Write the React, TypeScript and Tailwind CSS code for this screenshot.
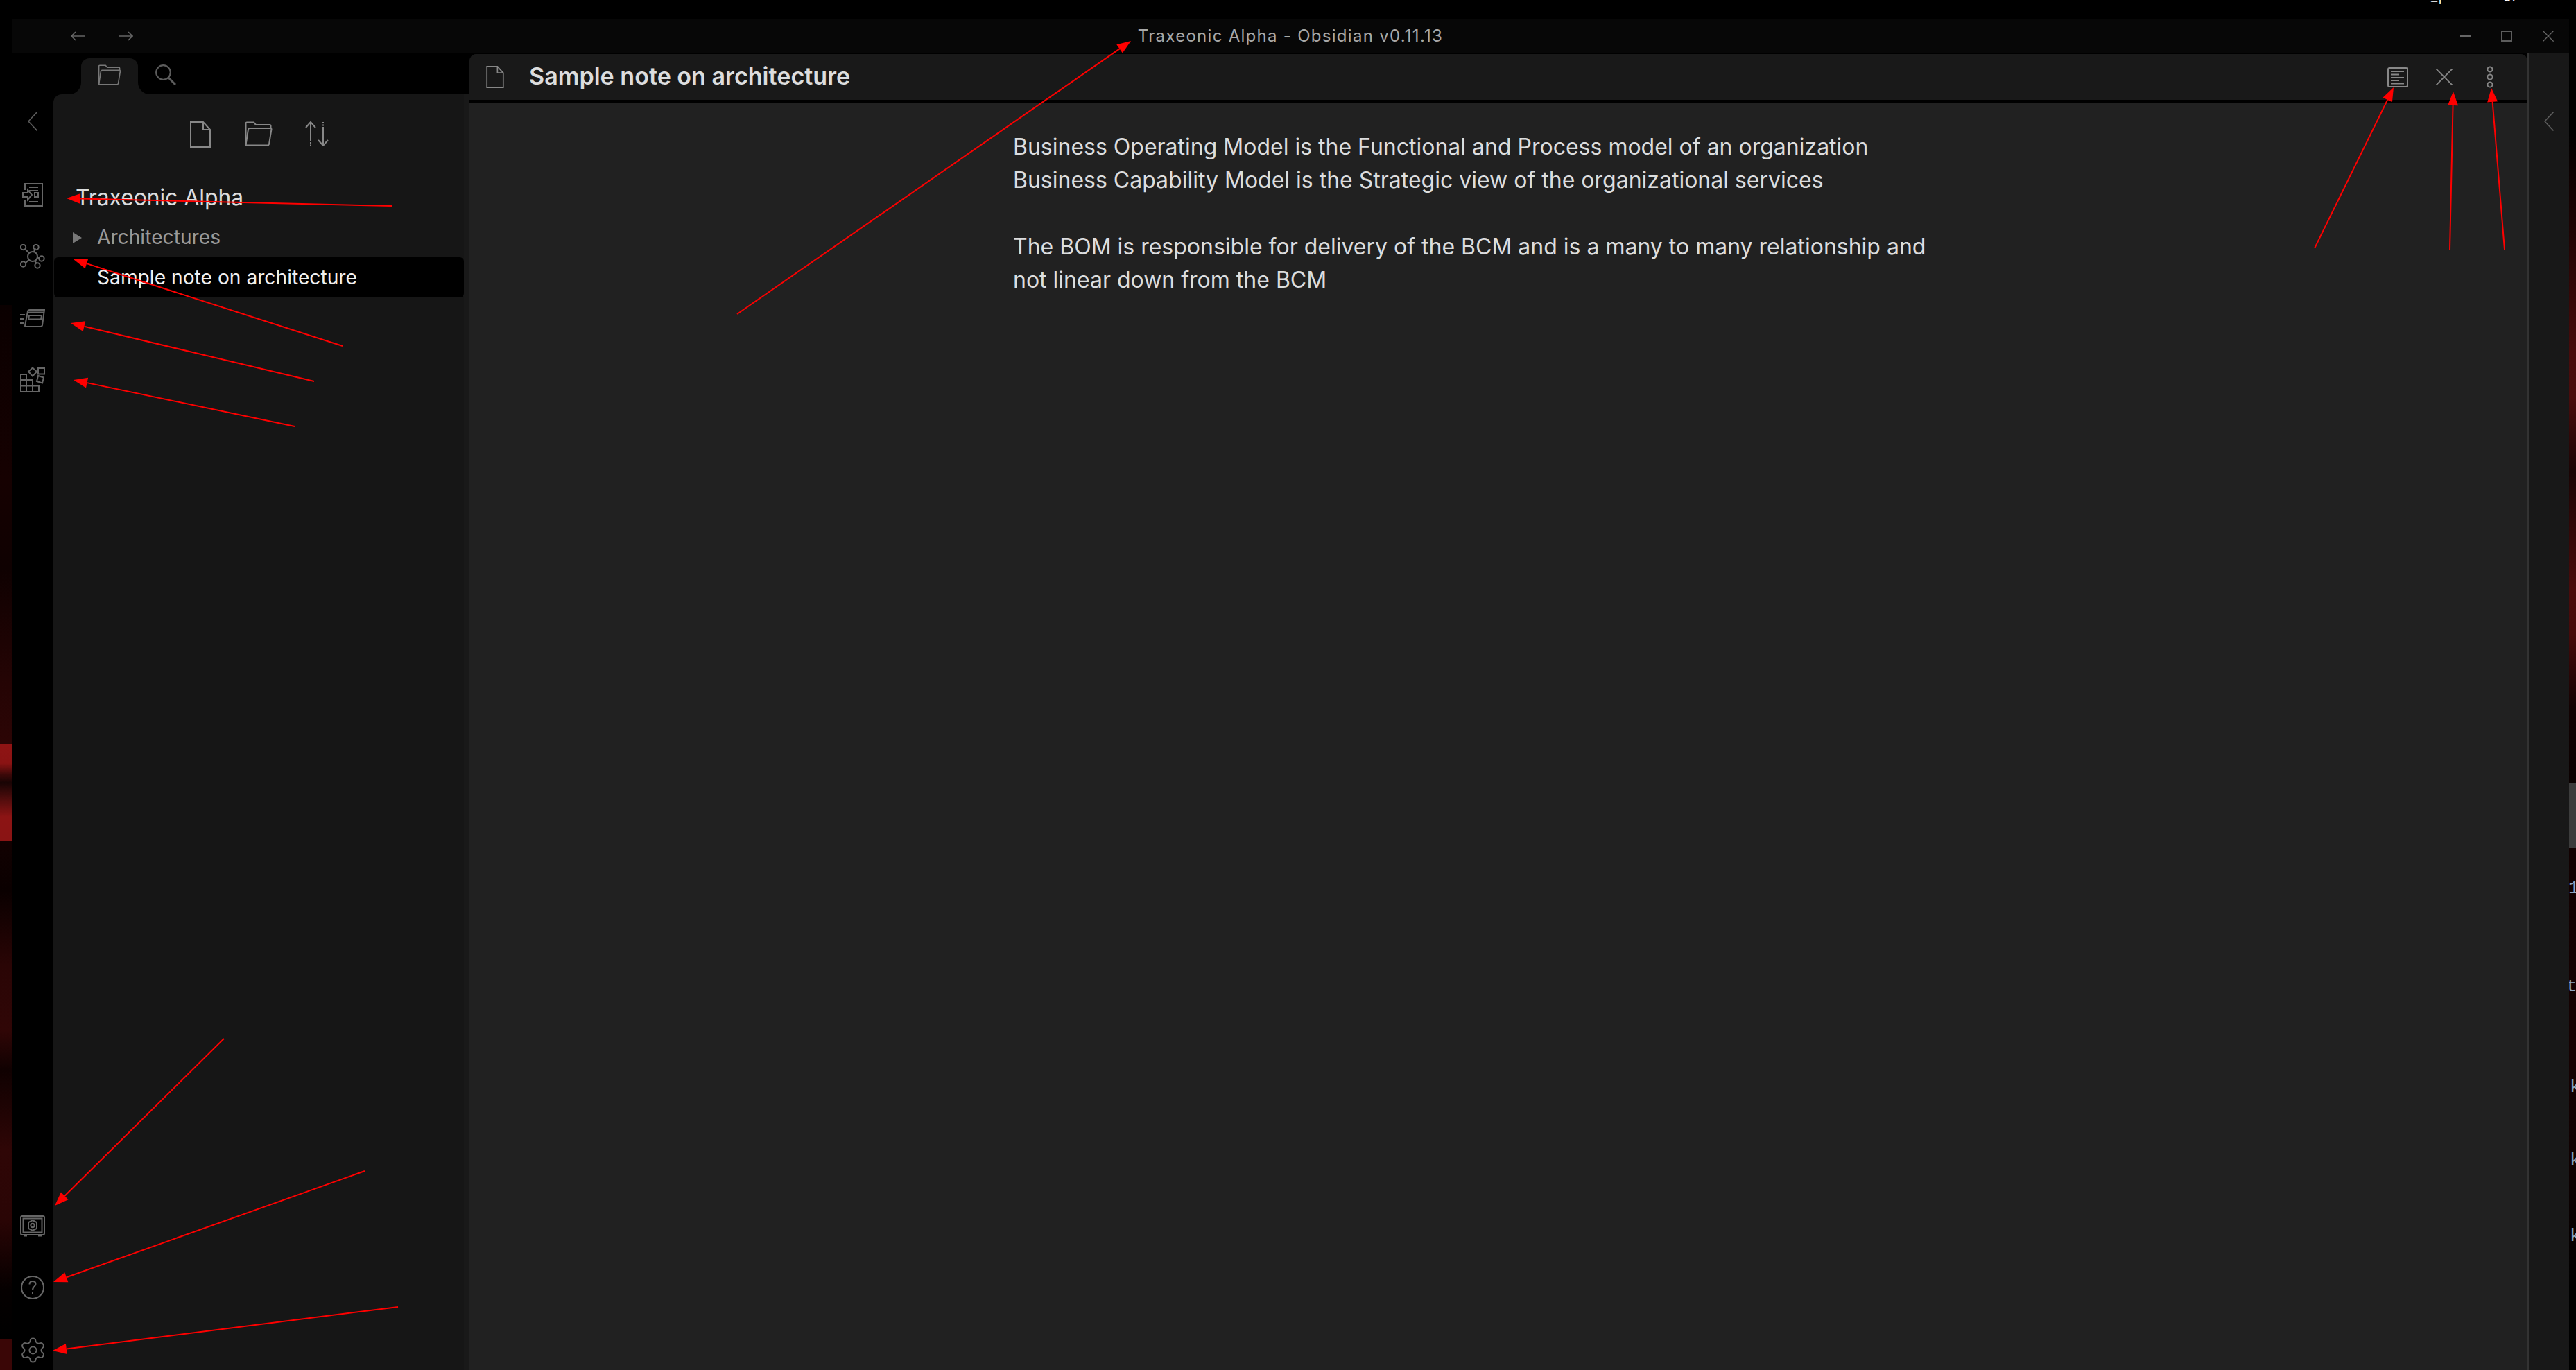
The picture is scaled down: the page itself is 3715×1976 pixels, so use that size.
import React from "react";
import { Settings } from "lucide-react";

const arrows: [number, number, number, number][] = [
  [96, 286, 565, 297],
  [106, 374, 494, 499],
  [102, 466, 453, 550],
  [106, 548, 425, 615],
  [79, 1739, 323, 1498],
  [77, 1849, 526, 1689],
  [76, 1948, 574, 1885],
  [1631, 59, 1063, 453],
  [3452, 126, 3338, 358],
  [3538, 132, 3533, 361],
  [3593, 127, 3612, 360],
];

function Arrows() {
  return (
    <svg className="absolute inset-0 w-full h-full pointer-events-none" viewBox="0 0 3715 1976">
      {arrows.map(([tx, ty, sx, sy], i) => {
        const d = Math.hypot(sx - tx, sy - ty);
        const ux = (sx - tx) / d;
        const uy = (sy - ty) / d;
        const L = 20;
        const W = 7.5;
        const bx = tx + ux * L;
        const by = ty + uy * L;
        return (
          <g key={i}>
            <line x1={bx} y1={by} x2={sx} y2={sy} stroke="#ff0000" strokeWidth={2} />
            <polygon
              points={`${tx},${ty} ${bx - uy * W},${by + ux * W} ${bx + uy * W},${by - ux * W}`}
              fill="#ff0000"
            />
          </g>
        );
      })}
    </svg>
  );
}

const FolderIcon = ({ w, h, c }: { w: number; h: number; c: string }) => (
  <svg width={w} height={h} viewBox="0 0 40 36" fill="none" stroke={c} strokeWidth="2">
    <path d="M1.5 34 V3 Q1.5 1.5 3 1.5 H13 L16 5 H36 Q37.5 5 37.5 6.5 V10" />
    <path d="M1.5 34 Q2 34.5 3 34.5 H33 Q34.5 34.5 35 33 L38.5 11.5 Q38.5 10 37 10 H7 Q5.5 10 5 11.5 Z" />
  </svg>
);

const FileIcon = ({ w, h, c }: { w: number; h: number; c: string }) => (
  <svg width={w} height={h} viewBox="0 0 30 38" fill="none" stroke={c} strokeWidth="2">
    <path d="M1 1 H19 L29 12 V37 H1 Z" />
    <path d="M19 1 V12 H29" />
  </svg>
);

const SortIcon = () => (
  <svg width="34" height="36" viewBox="0 0 34 36" fill="none" stroke="#888" strokeWidth="2">
    <path d="M1 9 L8 1 L15 9" />
    <path d="M8 1 V28" />
    <path d="M8 30 V35" strokeDasharray="2 1.5" />
    <path d="M26 1 V7" strokeDasharray="2 1.5" />
    <path d="M26 8 V35" />
    <path d="M19 27 L26 35 L33 27" />
  </svg>
);

const SearchIcon = () => (
  <svg width="30" height="30" viewBox="0 0 30 30" fill="none" stroke="#5c5c5c" strokeWidth="2.2">
    <circle cx="11.5" cy="11.5" r="10.3" />
    <path d="M19 19 L29 29" strokeWidth="3" />
  </svg>
);

const Chevron = ({ c }: { c: string }) => (
  <svg width="14" height="28" viewBox="0 0 14 28" fill="none" stroke={c} strokeWidth="1.6">
    <path d="M13.5 0.5 L1 14 L13.5 27.5" />
  </svg>
);

const NavArrow = ({ right }: { right?: boolean }) => (
  <svg width="20" height="14" viewBox="0 0 20 14" fill="none" stroke="#666" strokeWidth="1.6">
    {right ? <path d="M0 7 H19 M13 1 L19 7 L13 13" /> : <path d="M20 7 H1 M7 1 L1 7 L7 13" />}
  </svg>
);

const S = "#666";

const DocIcon = () => (
  <svg width="30" height="34" viewBox="0 0 30 34" fill="none" stroke={S} strokeWidth="2">
    <path d="M4 10 V1 H29 V33 H4 V24" />
    <path d="M10 6 H23 M10 11 H23 M10 27 H23" />
    <rect x="18" y="14" width="5" height="6" />
    <path d="M1 14 H8 V10 L14 17 L8 24 V20 H1 Z" />
  </svg>
);

const GraphIcon = () => (
  <svg width="36" height="36" viewBox="0 0 36 36" fill="none" stroke={S} strokeWidth="2">
    <circle cx="18" cy="18" r="7" />
    <circle cx="4.5" cy="4.5" r="3.7" />
    <circle cx="23" cy="4.5" r="3.7" />
    <circle cx="31" cy="21" r="3.7" />
    <circle cx="25" cy="31" r="3.7" />
    <circle cx="4.5" cy="29" r="3.7" />
    <path d="M7.5 7.5 L13 13 M22 5 L20 11 M25 19.5 L27.5 20.5 M21 24 L23.5 27.5 M8 27 L12.5 23" />
  </svg>
);

const CardsIcon = () => (
  <svg width="36" height="26" viewBox="0 0 36 26" fill="none" stroke={S} strokeWidth="2">
    <path d="M0 8 H7 M0 14 H5 M0 20 H6" />
    <path d="M7 24 L11 3 Q11.5 1 14 1 H35 L32 23 Q31.5 25 29 25 H9 Q7 25 7 24 Z" />
    <path d="M11 4.5 H34" />
    <path d="M13 9 H31 L30 14.5 H12 Z" />
  </svg>
);

const BricksIcon = () => (
  <svg width="36" height="36" viewBox="0 0 36 36" fill="none" stroke={S} strokeWidth="2">
    <path d="M1 35 V10 H9 V35 M1 18 H18 V35 M1 26.5 H27 V35 H1" />
    <path d="M18 0.5 L24 6 L18 12.5 L12 6 Z" />
    <rect x="26" y="1" width="9" height="8.5" />
    <path d="M26 12 L34 14.5 L32 22.5 L24 20 Z" />
  </svg>
);

const VaultIcon = () => (
  <svg width="36" height="31" viewBox="0 0 36 31" fill="none" stroke={S} strokeWidth="2">
    <rect x="1" y="1" width="34" height="27" rx="2" />
    <rect x="4.5" y="4.5" width="27" height="20" />
    <path d="M18 7 L24 10 V19 L18 22 L12 19 V10 Z" />
    <circle cx="18" cy="14.5" r="2.7" />
    <path d="M5 29.5 H10 M26 29.5 H31" />
  </svg>
);

const HelpIcon = () => (
  <svg width="34" height="34" viewBox="0 0 34 34" fill="none" stroke={S} strokeWidth="2">
    <circle cx="17" cy="17" r="16" />
    <path d="M12.5 12.5 C12.5 9.5 14.5 8 17 8 C19.7 8 21.5 9.7 21.5 12 C21.5 15.5 17 15.5 17 20.5" />
    <path d="M17 24 V26.5" />
  </svg>
);

const PreviewIcon = () => (
  <svg width="30" height="29" viewBox="0 0 30 29" fill="none" stroke="#888" strokeWidth="2">
    <rect x="1" y="1" width="28" height="27" rx="2" />
    <path d="M5 6 H24 M5 10.5 H17 M5 15 H24 M5 19 H17 M5 23.5 H24" />
  </svg>
);

const CloseIcon = ({ s, c }: { s: number; c: string }) => (
  <svg width={s} height={s} viewBox="0 0 24 24" fill="none" stroke={c} strokeWidth={s > 20 ? 1.8 : 2}>
    <path d="M0.5 0.5 L23.5 23.5 M23.5 0.5 L0.5 23.5" />
  </svg>
);

const MoreIcon = () => (
  <svg width="10" height="32" viewBox="0 0 10 32" fill="none" stroke="#888" strokeWidth="2">
    <circle cx="5" cy="5" r="3.6" />
    <circle cx="5" cy="16" r="3.6" />
    <circle cx="5" cy="27" r="3.6" />
  </svg>
);

function LeftStrip() {
  return (
    <div className="w-[17px] shrink-0 flex flex-col">
      <div className="h-[440px] bg-black" />
      <div className="h-[633px] bg-[linear-gradient(to_bottom,#0a0000_0%,#160101_40%,#0f0101_60%,#240404_85%,#2c0505_100%)]" />
      <div className="h-[140px] bg-[linear-gradient(to_bottom,#8f1414_0%,#8a1313_20%,#3a0808_32%,#180404_40%,#4a0c0c_55%,#8c1414_75%,#8a1414_100%)]" />
      <div className="h-[719px] bg-[linear-gradient(to_bottom,#120101_0%,#0a0000_10%,#2a0505_25%,#300606_38%,#100101_46%,#2f0606_62%,#2a0505_76%,#050000_90%,#000000_100%)]" />
      <div className="flex-1 bg-[#3a0606]" />
    </div>
  );
}

function RightStrip() {
  return (
    <div className="w-[10px] shrink-0 flex flex-col relative overflow-hidden pt-[60px]">
      <div className="h-[1069px] bg-[linear-gradient(to_bottom,#000000_0%,#000000_12%,#1e0303_25%,#480b0b_42%,#4a0c0c_48%,#1a0404_58%,#4a0b0b_74%,#460a0a_80%,#120202_90%,#0a0000_100%)]" />
      <div className="h-[94px] bg-[#3c3c3c]" />
      <div className="flex-1 bg-[linear-gradient(to_bottom,#120101_0%,#160202_40%,#100101_60%,#000000_85%)]" />
      <span className="absolute left-[-1px] top-[1266px] font-['Liberation_Mono'] text-[26px] leading-[30px] text-[#8fa6c0]">1</span>
      <span className="absolute left-[-4px] top-[1408px] font-['Liberation_Mono'] text-[26px] leading-[30px] text-[#8fa6c0]">t</span>
      <span className="absolute left-[1px] top-[1553px] font-['Liberation_Mono'] text-[26px] leading-[30px] text-[#8fa6c0]">k</span>
      <span className="absolute left-[1px] top-[1659px] font-['Liberation_Mono'] text-[26px] leading-[30px] text-[#8fa6c0]">k</span>
      <span className="absolute left-[1px] top-[1768px] font-['Liberation_Mono'] text-[26px] leading-[30px] text-[#8fa6c0]">k</span>
    </div>
  );
}

export default function App() {
  return (
    <div className="relative w-[3715px] h-[1976px] bg-black flex overflow-hidden font-['Inter',sans-serif]">
      <LeftStrip />
      <div className="flex-1 min-w-0 flex flex-col pt-[28px] bg-black">
        {/* title bar */}
        <div className="h-[48px] shrink-0 bg-[#070707] grid grid-cols-[1fr_auto_1fr] items-center">
          <div className="flex items-center gap-[50px] pl-[85px]">
            <NavArrow />
            <NavArrow right />
          </div>
          <div className="text-[24px] leading-[48px] tracking-[1.28px] text-[#a8a8a8]">Traxeonic Alpha - Obsidian v0.11.13</div>
          <div className="flex items-center justify-end pr-[22px] gap-[44px]">
            <div className="w-[16px] h-[2px] bg-[#666]" />
            <div className="w-[16px] h-[16px] border-2 border-[#5c5c5c]" />
            <CloseIcon s={16} c="#666" />
          </div>
        </div>

        <div className="flex-1 min-h-0 flex">
          {/* left ribbon */}
          <div className="w-[60px] shrink-0 bg-black flex flex-col items-center justify-between pb-[12px]">
            <div className="flex flex-col items-center pt-[85px]">
              <div className="h-[28px] flex items-center">
                <Chevron c="#5c5c5c" />
              </div>
              <div className="mt-[74px] flex flex-col items-center gap-[53px]">
                <div className="h-[36px] flex items-center"><DocIcon /></div>
                <div className="h-[36px] flex items-center"><GraphIcon /></div>
                <div className="h-[36px] flex items-center"><CardsIcon /></div>
                <div className="h-[36px] flex items-center"><BricksIcon /></div>
              </div>
            </div>
            <div className="flex flex-col items-center gap-[56px]">
              <div className="h-[31px] flex items-center"><VaultIcon /></div>
              <div className="h-[34px] flex items-center"><HelpIcon /></div>
              <div className="h-[34px] flex items-center"><Settings size={41} strokeWidth={1.1} color="#666" /></div>
            </div>
          </div>

          {/* left sidebar */}
          <div className="w-[600px] shrink-0 flex flex-col bg-black">
            <div className="h-[60px] shrink-0 flex items-end pl-[23px]">
              <div className="w-[17px] h-[17px] bg-[#161616]">
                <div className="w-full h-full bg-black rounded-br-[17px]" />
              </div>
              <div className="w-[82px] h-[52px] bg-[#161616] rounded-t-[12px] flex items-start justify-center pt-[9px]">
                <FolderIcon w={34} h={30} c="#777" />
              </div>
              <div className="w-[17px] h-[17px] bg-[#161616]">
                <div className="w-full h-full bg-black rounded-bl-[17px]" />
              </div>
              <div className="self-start mt-[17px] ml-[8px]">
                <SearchIcon />
              </div>
            </div>
            <div className="flex-1 min-h-0 flex bg-black">
              <div className="flex-1 min-w-0 bg-[#161616] rounded-tl-[12px] flex flex-col">
                <div className="h-[76px] shrink-0 mt-[39px] pl-[197px] flex items-start gap-[49px]">
                  <FileIcon w={30} h={38} c="#888" />
                  <FolderIcon w={40} h={36} c="#888" />
                  <div className="ml-[-2px]"><SortIcon /></div>
                </div>
                <div className="pl-[32px] mt-[3px] h-[60px] flex items-center pt-[1px] text-[31.8px] leading-[48px] text-[#dcddde]">Traxeonic Alpha</div>
                <div className="h-[57px] flex items-center pl-[28px] text-[28.2px] text-[#999]">
                  <div className="w-0 h-0 border-y-[8px] border-y-transparent border-l-[13px] border-l-[#777] mr-[22px]" />
                  Architectures
                </div>
                <div className="ml-[1px] h-[58px] flex items-center rounded-[6px] bg-black pl-[62px] text-[28.2px] text-[#f0f0f0]">
                  Sample note on architecture
                </div>
              </div>
              <div className="w-[8px] shrink-0 bg-[#191919]" />
            </div>
          </div>

          {/* main */}
          <div className="flex-1 min-w-0 flex flex-col pt-[2px] bg-black">
            <div className="flex-1 min-h-0 flex flex-col rounded-t-[10px] overflow-hidden bg-[#212121]">
              <div className="h-[66px] shrink-0 bg-[#191919] flex items-center pl-[24px] pr-[49px]">
                <FileIcon w={26} h={32} c="#888" />
                <div className="ml-[36px] mb-[3px] text-[34.1px] font-semibold leading-[40px] text-[#dcddde] flex-1">Sample note on architecture</div>
                <div className="flex items-center">
                  <PreviewIcon />
                  <div className="ml-[40px]"><CloseIcon s={24} c="#888" /></div>
                  <div className="ml-[49px]"><MoreIcon /></div>
                </div>
              </div>
              <div className="h-[4px] shrink-0 bg-black" />
              <div className="flex-1 min-h-0 pt-[40px]">
                <div className="w-[1400px] mx-auto pr-[40px] text-[32px] leading-[48px] text-[#dcddde]">
                  <div>Business Operating Model is the Functional and Process model of an organization</div>
                  <div>Business Capability Model is the Strategic view of the organizational services</div>
                  <div className="h-[48px]" />
                  <div>The BOM is responsible for delivery of the BCM and is a many to many relationship and not linear down from the BCM</div>
                </div>
              </div>
            </div>
          </div>

          <div className="w-[2px] shrink-0 bg-[#333]" />
          {/* right ribbon */}
          <div className="w-[58px] shrink-0 bg-[#181818] flex justify-center pt-[85px]">
            <div className="h-[28px]"><Chevron c="#5c5c5c" /></div>
          </div>
        </div>
      </div>
      <RightStrip />

      <span className="absolute left-[3506px] top-[-18px] text-[20px] leading-[24px] text-white">_|</span>
      <span className="absolute left-[3610px] top-[-18px] text-[22px] leading-[24px] text-white">Jr</span>
      <Arrows />
    </div>
  );
}
